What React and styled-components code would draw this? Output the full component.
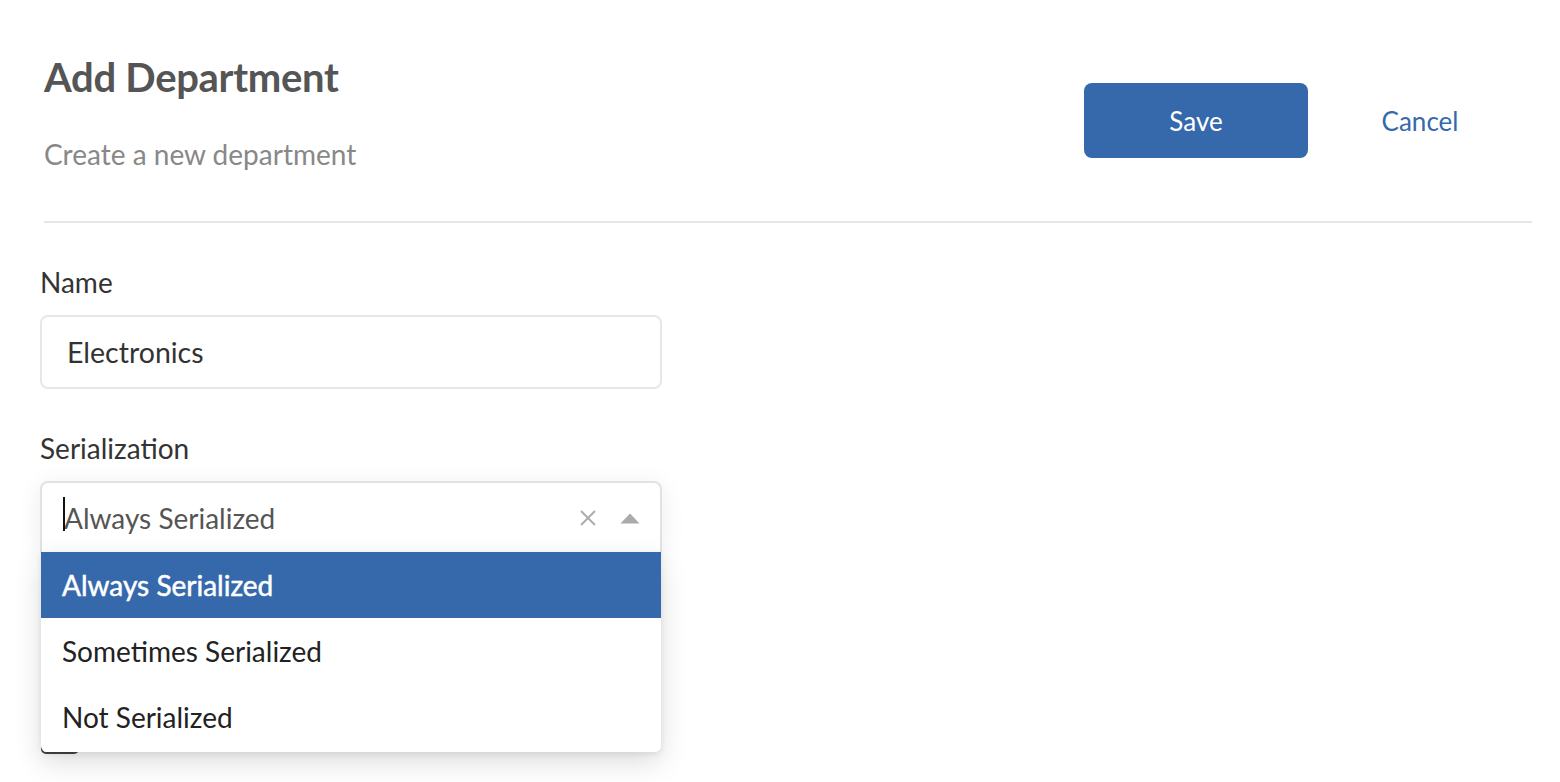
import React from "react";
import styled, { createGlobalStyle } from "styled-components";

const GlobalStyle = createGlobalStyle`
  html, body { margin: 0; padding: 0; background: #fff; }
  body { font-family: Lato, "Open Sans", sans-serif; -webkit-font-smoothing: antialiased; }
  * { box-sizing: border-box; }
`;

const BLUE = "#3569ab";

const Page = styled.div`
  padding: 0 28px 0 40px;
  width: 1560px;
  height: 782px;
  overflow: hidden;
`;

const Header = styled.header`
  display: flex;
  justify-content: space-between;
  align-items: flex-start;
  margin-left: 4px;
  padding: 53px 0 52px;
  border-bottom: 2px solid #e6e6e6;
`;

const TitleBlock = styled.div`
  display: flex;
  flex-direction: column;
  gap: 38px;
`;

const Title = styled.h1`
  margin: 0;
  font-size: 40px;
  line-height: 48px;
  font-weight: 700;
  color: #555;
  letter-spacing: -0.3px;
`;

const Subtitle = styled.p`
  margin: 0;
  font-size: 28px;
  line-height: 30px;
  color: #888;
`;

const Actions = styled.div`
  display: flex;
  margin-top: 30px;
`;

const Button = styled.button`
  width: 224px;
  height: 75px;
  border: none;
  border-radius: 8px;
  font-family: inherit;
  font-size: 26px;
  cursor: pointer;
  background: ${(p) => (p.$primary ? BLUE : "transparent")};
  color: ${(p) => (p.$primary ? "#fff" : BLUE)};
`;

const Form = styled.form`
  display: flex;
  flex-direction: column;
  width: 622px;
  padding-top: 44px;
`;

const Field = styled.div`
  display: flex;
  flex-direction: column;
  gap: 18px;
  margin-bottom: 44px;
`;

const Label = styled.label`
  font-size: 28px;
  line-height: 30px;
  color: #333;
`;

const Input = styled.input`
  height: 74px;
  border: 2px solid #e8e8e8;
  border-radius: 8px;
  padding: 0 25px;
  font-family: inherit;
  font-size: 28.5px;
  color: #333;
  outline: none;
`;

const SelectWrap = styled.div`
  position: relative;
`;

const Control = styled.div`
  height: 72px;
  display: flex;
  align-items: center;
  border: 2px solid #e2e2e2;
  border-bottom: none;
  border-radius: 8px 8px 0 0;
  padding: 0 20px 0 22px;
  box-shadow: 0 4px 24px rgba(0, 0, 0, 0.08);
  position: relative;
`;

const Value = styled.span`
  flex: 1;
  font-size: 28px;
  color: #555;
  position: relative;
`;

const Caret = styled.span`
  position: absolute;
  left: -1px;
  top: -4px;
  width: 1.5px;
  height: 34px;
  background: #111;
`;

const Indicators = styled.div`
  display: flex;
  align-items: center;
  gap: 23px;
`;

const Menu = styled.ul`
  position: absolute;
  top: 71px;
  left: 1px;
  right: 1px;
  margin: 0;
  padding: 0 0 2px;
  list-style: none;
  background: #fff;
  border-radius: 0 0 6px 6px;
  box-shadow: 0 10px 28px rgba(0, 0, 0, 0.14), 0 2px 6px rgba(0, 0, 0, 0.08);
  z-index: 2;
`;

const Option = styled.li`
  height: 66px;
  display: flex;
  align-items: center;
  padding-left: 21px;
  font-size: 28px;
  background: ${(p) => (p.$active ? BLUE : "transparent")};
  color: ${(p) => (p.$active ? "#fff" : "#222")};
  -webkit-text-stroke: ${(p) => (p.$active ? "0.5px #fff" : "0")};
`;

const Checkbox = styled.span`
  display: block;
  width: 38px;
  height: 38px;
  border: 2px solid #444;
  border-radius: 5px;
  margin: 163px 0 0 1px;
`;

export default function App() {
  return (
    <>
      <GlobalStyle />
      <Page>
        <Header>
          <TitleBlock>
            <Title>Add Department</Title>
            <Subtitle>Create a new department</Subtitle>
          </TitleBlock>
          <Actions>
            <Button $primary>Save</Button>
            <Button>Cancel</Button>
          </Actions>
        </Header>
        <Form>
          <Field>
            <Label>Name</Label>
            <Input defaultValue="Electronics" />
          </Field>
          <Field>
            <Label>Serialization</Label>
            <SelectWrap>
              <Control>
                <Value>
                  <Caret />
                  Always Serialized
                </Value>
                <Indicators>
                  <svg width="18" height="18" viewBox="0 0 18 18">
                    <path d="M2 2 L16 16 M16 2 L2 16" stroke="#aaa" strokeWidth="1.8" fill="none" />
                  </svg>
                  <svg width="20" height="11" viewBox="0 0 20 11">
                    <path d="M10 0.5 L19.5 10.5 L0.5 10.5 Z" fill="#aaa" />
                  </svg>
                </Indicators>
              </Control>
              <Menu>
                <Option $active>Always Serialized</Option>
                <Option>Sometimes Serialized</Option>
                <Option>Not Serialized</Option>
              </Menu>
              <Checkbox />
            </SelectWrap>
          </Field>
        </Form>
      </Page>
    </>
  );
}
